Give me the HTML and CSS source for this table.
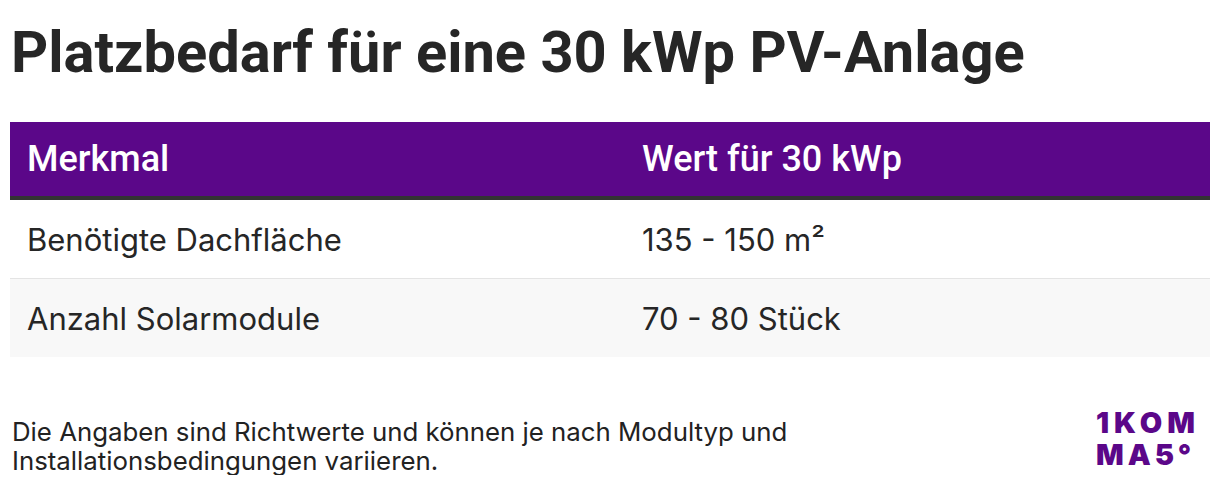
FILE: index.html
```html
<!DOCTYPE html>
<html lang="de">
<head>
<meta charset="utf-8">
<link rel="stylesheet" href="styles.css">
</head>
<body>
<div class="page">
  <h1 class="title">Platzbedarf für eine 30 kWp PV-Anlage</h1>
  <table class="spec">
    <thead>
      <tr><th class="c1">Merkmal</th><th class="c2">Wert für 30 kWp</th></tr>
    </thead>
    <tbody>
      <tr><td class="c1">Benötigte Dachfläche</td><td class="c2">135 - 150 m²</td></tr>
      <tr class="alt"><td class="c1">Anzahl Solarmodule</td><td class="c2">70 - 80 Stück</td></tr>
    </tbody>
  </table>
  <div class="foot">
    <p class="note">Die Angaben sind Richtwerte und können je nach Modultyp und<br>Installationsbedingungen variieren.</p>
    <div class="logo"><div class="l1">1KOM</div><div class="l2">MA5°</div></div>
  </div>
</div>
</body>
</html>
```
FILE: styles.css
```css
html, body { margin: 0; padding: 0; background: #fff; }
.page { padding: 0 10px; width: 1200px; }
.title {
  margin: 0;
  padding: 18px 0 0 1px;
  height: 122px;
  box-sizing: border-box;
  font-family: Roboto, "Liberation Sans", sans-serif;
  font-weight: 700;
  font-size: 57.8px;
  letter-spacing: 0;
  color: #262626;
  line-height: 68px;
}
.spec {
  width: 1200px;
  border-collapse: collapse;
  font-family: Inter, "Liberation Sans", sans-serif;
}
.spec th {
  background: #5b0789;
  color: #fff;
  font-family: Roboto, "Liberation Sans", sans-serif;
  font-weight: 500;
  font-size: 36px;
  text-align: left;
  height: 74px;
  padding: 0 0 0 17px;
  border-bottom: 4px solid #333;
}
.spec td {
  font-size: 31px;
  color: #262626;
  height: 78px;
  padding: 0 0 0 17px;
  font-weight: 400;
}
.spec .c1 { width: 598px; }
.spec tbody tr:first-child td { border-bottom: 1px solid #e4e4e4; }
.spec tr.alt td { background: #f8f8f8; }
.foot {
  display: flex;
  justify-content: space-between;
  align-items: flex-start;
  margin-top: 50px;
}
.note {
  margin: 10px 0 0 2px;
  font-family: Inter, "Liberation Sans", sans-serif;
  font-size: 25.8px;
  line-height: 29px;
  color: #222;
}
.logo {
  font-family: Inter, "Liberation Sans", sans-serif;
  font-weight: 900;
  color: #5b0789;
  font-size: 29px;
  line-height: 32px;
  margin-right: 10px;
  letter-spacing: 5px;
}
.l2 { letter-spacing: 4px; }
```
